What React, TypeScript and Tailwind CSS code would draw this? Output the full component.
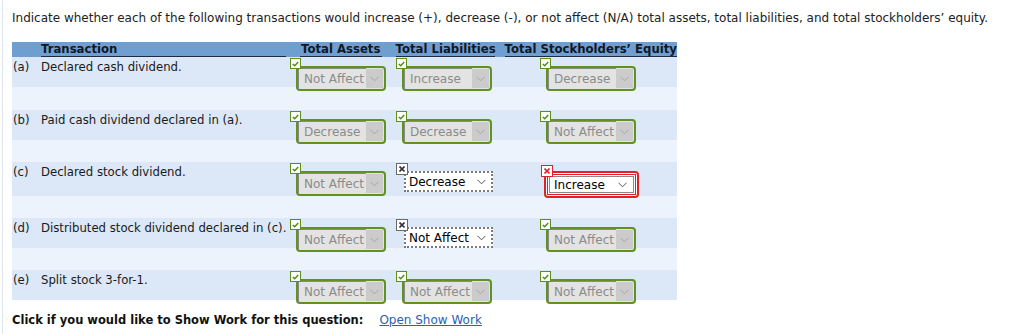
import React from "react";

type State = "ok" | "wrong" | "error";
type Cell = { value: string; state: State };
type Row = { key: string; label: string; cells: Cell[]; tall?: boolean; gap: string };

const ROWS: Row[] = [
  {
    key: "(a)",
    label: "Declared cash dividend.",
    gap: "h-[23px]",
    cells: [
      { value: "Not Affect", state: "ok" },
      { value: "Increase", state: "ok" },
      { value: "Decrease", state: "ok" },
    ],
  },
  {
    key: "(b)",
    label: "Paid cash dividend declared in (a).",
    gap: "h-[22px]",
    cells: [
      { value: "Decrease", state: "ok" },
      { value: "Decrease", state: "ok" },
      { value: "Not Affect", state: "ok" },
    ],
  },
  {
    key: "(c)",
    label: "Declared stock dividend.",
    tall: true,
    gap: "h-[22px]",
    cells: [
      { value: "Not Affect", state: "ok" },
      { value: "Decrease", state: "wrong" },
      { value: "Increase", state: "error" },
    ],
  },
  {
    key: "(d)",
    label: "Distributed stock dividend declared in (c).",
    gap: "h-[22px]",
    cells: [
      { value: "Not Affect", state: "ok" },
      { value: "Not Affect", state: "wrong" },
      { value: "Not Affect", state: "ok" },
    ],
  },
  {
    key: "(e)",
    label: "Split stock 3-for-1.",
    gap: "",
    cells: [
      { value: "Not Affect", state: "ok" },
      { value: "Not Affect", state: "ok" },
      { value: "Not Affect", state: "ok" },
    ],
  },
];

// widget columns: x 290 / 396 / 540 -> 677
const COL_WIDTHS = ["w-[106px]", "w-[144px]", "w-[137px]"];

function Chevron({ color }: { color: string }) {
  return (
    <svg width="9" height="6" viewBox="0 0 9 6" fill="none">
      <path d="M0.5 0.8 L4.5 4.8 L8.5 0.8" stroke={color} strokeWidth="1" />
    </svg>
  );
}

function Mark({ state }: { state: State }) {
  if (state === "ok") {
    return (
      <div className="relative z-10 w-[11px] h-[11px] bg-white border border-[#5d8f1c] flex items-center justify-center">
        <svg width="7" height="6" viewBox="0 0 7 6" fill="none">
          <path d="M0.8 3 L2.7 4.8 L6.2 1" stroke="#4f8a10" strokeWidth="1.4" />
        </svg>
      </div>
    );
  }
  const red = state === "error";
  return (
    <div
      className={
        red
          ? "relative z-10 w-[12px] h-[12px] bg-white border border-[#e0242c] flex items-center justify-center"
          : "relative z-10 w-[12px] h-[12px] bg-white border border-[#6b6b6b] flex items-center justify-center"
      }
    >
      <svg width="6" height="6" viewBox="0 0 6 6" fill="none">
        <path d="M0.5 0.5 L5.5 5.5 M5.5 0.5 L0.5 5.5" stroke={red ? "#e0242c" : "#333"} strokeWidth="1.6" />
      </svg>
    </div>
  );
}

function Answer({ cell }: { cell: Cell }) {
  if (cell.state === "ok") {
    return (
      <div className="flex flex-col">
        <Mark state="ok" />
        <div className="ml-[6px] -mt-[3px] w-[90px] h-[25px] rounded-[4px] border-2 border-[#5f9220] bg-[#e3e3e3] flex">
          <div className="flex-1 flex items-center pl-[5px] border-l border-t border-[#8a8a8a] text-[#8b8b8b] text-[12px]">
            {cell.value}
          </div>
          <div className="w-[17px] my-[1px] mr-[1px] bg-[#cbcbcb] flex items-center justify-center">
            <Chevron color="#a6a6a6" />
          </div>
        </div>
      </div>
    );
  }
  if (cell.state === "wrong") {
    return (
      <div className="flex flex-col">
        <Mark state="wrong" />
        <div className="ml-[8px] -mt-[4px] w-[89px] h-[21px] border-2 border-dotted border-[#7a7a7a] bg-white flex items-center pl-[3px] pr-[5px] text-[12px] text-black">
          <span className="flex-1">{cell.value}</span>
          <Chevron color="#555" />
        </div>
      </div>
    );
  }
  return (
    <div className="flex flex-col pt-[2px]">
      <div className="ml-[1px]">
        <Mark state="error" />
      </div>
      <div className="ml-[4px] -mt-[6px] w-[95px] h-[27px] rounded-[4px] border-2 border-[#e3202a] bg-white p-[1px]">
        <div className="h-full border border-[#e3202a] p-[1px]">
          <div className="h-full border border-[#8a8a8a] flex items-center pl-[4px] pr-[6px] text-[12px] text-black">
            <span className="flex-1">{cell.value}</span>
            <Chevron color="#555" />
          </div>
        </div>
      </div>
    </div>
  );
}

export default function App() {
  return (
    <div className="min-h-[334px] bg-white text-[#1a1a1a] font-['DejaVu_Sans',Verdana,sans-serif] text-[12px]">
      <div className="ml-[2px] border-l border-[#dfe5ec] min-h-[334px] pl-[9px] pt-[11px]">
        <p className="leading-[14px] text-[#222] whitespace-nowrap">
          Indicate whether each of the following transactions would increase (+), decrease (-), or not affect
          (N/A) total assets, total liabilities, and total stockholders’ equity.
        </p>

        <div className="mt-[17px] w-[665px]">
          <div className="h-[15px] bg-[#6f9fd0] flex items-end pl-[29px] font-bold text-[#101828] text-[11.7px] leading-[14px]">
            <div className="w-[246px] border-b border-[#1c2b45]">Transaction</div>
            <div className="ml-[14px] w-[82px] border-b border-[#1c2b45] text-center whitespace-nowrap">
              Total Assets
            </div>
            <div className="ml-[14px] w-[99px] border-b border-[#1c2b45] text-center whitespace-nowrap">
              Total Liabilities
            </div>
            <div className="ml-[10px] flex-1 border-b border-[#1c2b45] text-center whitespace-nowrap">
              Total Stockholders’ Equity
            </div>
          </div>

          {ROWS.map((row) => (
            <div key={row.key}>
              <div className={`${row.tall ? "h-[34px]" : "h-[30px]"} bg-[#dce8f7] flex`}>
                <div className="w-[278px] flex pt-[3px] leading-[14px] text-[11.7px] whitespace-nowrap">
                  <span className="w-[29px] pl-[1px]">{row.key}</span>
                  <span>{row.label}</span>
                </div>
                {row.cells.map((cell, j) => (
                  <div key={j} className={`${COL_WIDTHS[j]} pt-[1px]`}>
                    <Answer cell={cell} />
                  </div>
                ))}
              </div>
              {row.gap && <div className={`${row.gap} bg-[#edf3fc]`} />}
            </div>
          ))}
        </div>

        <div className="mt-[13px] leading-[14px] text-[11.5px] whitespace-nowrap">
          <span className="font-bold text-[#111]">Click if you would like to Show Work for this question:</span>
          <a href="#" className="ml-[16px] text-[12px] text-[#2a62ad] underline">
            Open Show Work
          </a>
        </div>
      </div>
    </div>
  );
}
